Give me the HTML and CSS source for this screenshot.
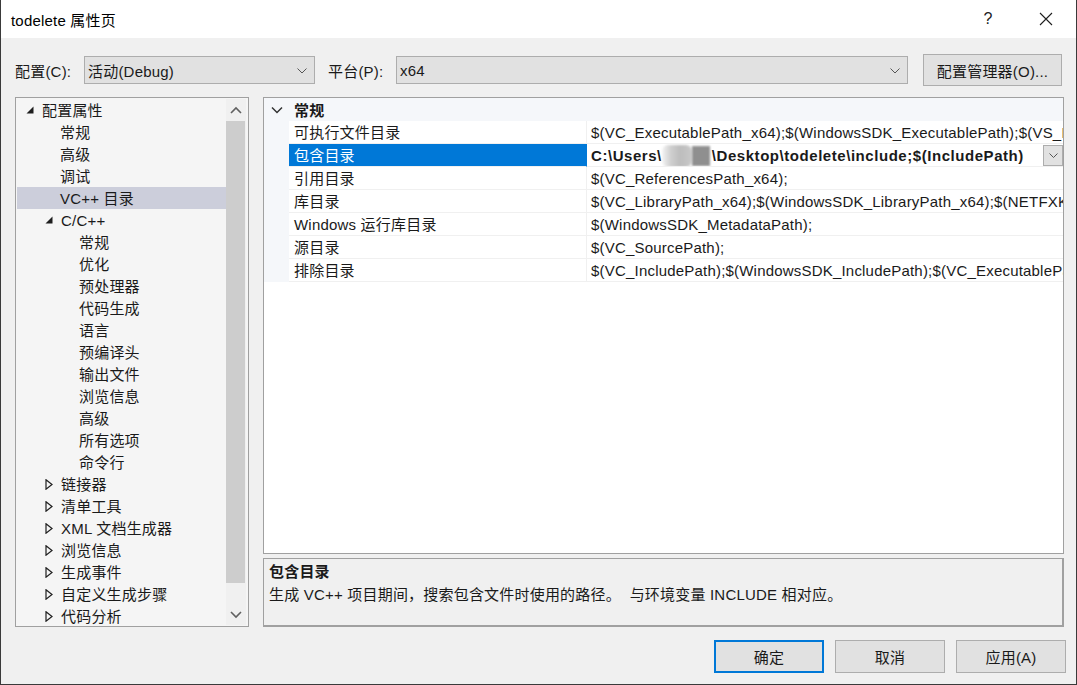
FILE: index.html
```html
<!DOCTYPE html>
<html lang="zh-CN">
<head>
<meta charset="utf-8">
<title>todelete 属性页</title>
<link rel="stylesheet" href="styles.css">
</head>
<body>
<div class="window">
  <div class="titlebar">
    <span class="title">todelete 属性页</span>
    <span class="tb-help">?</span>
    <span class="tb-close"><svg width="14" height="14" viewBox="0 0 14 14"><path d="M1 1 L13 13 M13 1 L1 13" stroke="#1e1e1e" stroke-width="1.1" fill="none"/></svg></span>
  </div>
  <div class="content">
    <div class="configrow">
      <span class="lbl lbl-cfg">配置(C):</span>
      <div class="combo combo-cfg"><span>活动(Debug)</span><svg class="chev" width="10" height="6" viewBox="0 0 10 6"><path d="M0.5 0.5 L5 5 L9.5 0.5" stroke="#555" fill="none"/></svg></div>
      <span class="lbl lbl-plat">平台(P):</span>
      <div class="combo combo-plat"><span>x64</span><svg class="chev" width="10" height="6" viewBox="0 0 10 6"><path d="M0.5 0.5 L5 5 L9.5 0.5" stroke="#555" fill="none"/></svg></div>
      <div class="btn btn-mgr">配置管理器(O)...</div>
    </div>
    <div class="main">
      <div class="tree">
        <div class="tree-list">
          <div class="trow l0"><svg class="tri" width="8" height="8" viewBox="0 0 8 8"><path d="M7.5 0.5 L7.5 7.5 L0.5 7.5 Z" fill="#1e1e1e"/></svg>配置属性</div>
          <div class="trow l1">常规</div>
          <div class="trow l1">高级</div>
          <div class="trow l1">调试</div>
          <div class="trow l1 sel">VC++ 目录</div>
          <div class="trow l1b"><svg class="tri" width="8" height="8" viewBox="0 0 8 8"><path d="M7.5 0.5 L7.5 7.5 L0.5 7.5 Z" fill="#1e1e1e"/></svg>C/C++</div>
          <div class="trow l2">常规</div>
          <div class="trow l2">优化</div>
          <div class="trow l2">预处理器</div>
          <div class="trow l2">代码生成</div>
          <div class="trow l2">语言</div>
          <div class="trow l2">预编译头</div>
          <div class="trow l2">输出文件</div>
          <div class="trow l2">浏览信息</div>
          <div class="trow l2">高级</div>
          <div class="trow l2">所有选项</div>
          <div class="trow l2">命令行</div>
          <div class="trow l1b"><svg class="tri-c" width="8" height="11" viewBox="0 0 8 11"><path d="M1 0.8 L7 5.5 L1 10.2 Z" fill="none" stroke="#1e1e1e" stroke-width="1.2"/></svg>链接器</div>
          <div class="trow l1b"><svg class="tri-c" width="8" height="11" viewBox="0 0 8 11"><path d="M1 0.8 L7 5.5 L1 10.2 Z" fill="none" stroke="#1e1e1e" stroke-width="1.2"/></svg>清单工具</div>
          <div class="trow l1b"><svg class="tri-c" width="8" height="11" viewBox="0 0 8 11"><path d="M1 0.8 L7 5.5 L1 10.2 Z" fill="none" stroke="#1e1e1e" stroke-width="1.2"/></svg>XML 文档生成器</div>
          <div class="trow l1b"><svg class="tri-c" width="8" height="11" viewBox="0 0 8 11"><path d="M1 0.8 L7 5.5 L1 10.2 Z" fill="none" stroke="#1e1e1e" stroke-width="1.2"/></svg>浏览信息</div>
          <div class="trow l1b"><svg class="tri-c" width="8" height="11" viewBox="0 0 8 11"><path d="M1 0.8 L7 5.5 L1 10.2 Z" fill="none" stroke="#1e1e1e" stroke-width="1.2"/></svg>生成事件</div>
          <div class="trow l1b"><svg class="tri-c" width="8" height="11" viewBox="0 0 8 11"><path d="M1 0.8 L7 5.5 L1 10.2 Z" fill="none" stroke="#1e1e1e" stroke-width="1.2"/></svg>自定义生成步骤</div>
          <div class="trow l1b"><svg class="tri-c" width="8" height="11" viewBox="0 0 8 11"><path d="M1 0.8 L7 5.5 L1 10.2 Z" fill="none" stroke="#1e1e1e" stroke-width="1.2"/></svg>代码分析</div>
        </div>
        <div class="vscroll">
          <div class="sb-arrow"><svg width="12" height="8" viewBox="0 0 12 8"><path d="M1 7 L6 2 L11 7" stroke="#606060" stroke-width="1.6" fill="none"/></svg></div>
          <div class="sb-track"><div class="sb-thumb"></div></div>
          <div class="sb-arrow"><svg width="12" height="8" viewBox="0 0 12 8"><path d="M1 1 L6 6 L11 1" stroke="#606060" stroke-width="1.6" fill="none"/></svg></div>
        </div>
      </div>
      <div class="rightcol">
        <div class="grid">
          <div class="ghead">
            <span class="gchev"><svg width="12" height="8" viewBox="0 0 12 8"><path d="M1 1.5 L6 6.5 L11 1.5" stroke="#333" stroke-width="1.5" fill="none"/></svg></span>
            <span class="gcat">常规</span>
          </div>
          <div class="grow"><span class="gname">可执行文件目录</span><span class="gval">$(VC_ExecutablePath_x64);$(WindowsSDK_ExecutablePath);$(VS_ExecutablePath);$(MSBuild_ExecutablePath)</span></div>
          <div class="grow gsel"><span class="gname">包含目录</span><span class="gval bold">C:\Users\<span class="blur"><i class="b1"></i><i class="b2"></i></span>\Desktop\todelete\include;$(IncludePath)</span><span class="gdrop"><svg width="9" height="5" viewBox="0 0 9 5"><path d="M0.5 0.5 L4.5 4.5 L8.5 0.5" stroke="#555" fill="none"/></svg></span></div>
          <div class="grow"><span class="gname">引用目录</span><span class="gval">$(VC_ReferencesPath_x64);</span></div>
          <div class="grow"><span class="gname">库目录</span><span class="gval">$(VC_LibraryPath_x64);$(WindowsSDK_LibraryPath_x64);$(NETFXKitsDir)Lib\um\x64</span></div>
          <div class="grow"><span class="gname">Windows 运行库目录</span><span class="gval">$(WindowsSDK_MetadataPath);</span></div>
          <div class="grow"><span class="gname">源目录</span><span class="gval">$(VC_SourcePath);</span></div>
          <div class="grow"><span class="gname">排除目录</span><span class="gval">$(VC_IncludePath);$(WindowsSDK_IncludePath);$(VC_ExecutablePath_x64);$(VC_LibraryPath_x64)</span></div>
        </div>
        <div class="desc">
          <div class="desc-title">包含目录</div>
          <div class="desc-text">生成 VC++ 项目期间，搜索包含文件时使用的路径。&nbsp; 与环境变量 INCLUDE 相对应。</div>
        </div>
      </div>
    </div>
    <div class="btnrow">
      <div class="btn btn-ok">确定</div>
      <div class="btn">取消</div>
      <div class="btn">应用(A)</div>
    </div>
  </div>
</div>
</body>
</html>
```

FILE: styles.css
```css
* { box-sizing: border-box; }
html, body { margin: 0; padding: 0; }
body {
  width: 1077px;
  height: 685px;
  overflow: hidden;
  font-family: "Liberation Sans", "Noto Sans CJK SC", sans-serif;
  font-size: 15px;
  letter-spacing: 0.2px;
  color: #1a1a1a;
  background: #f0f0f0;
}
.window {
  width: 1077px;
  height: 685px;
  border: 1px solid #3a3a3a;
  border-top: none;
  display: flex;
  flex-direction: column;
}
.titlebar {
  height: 38px;
  background: #fff;
  display: flex;
  align-items: center;
  padding-left: 10px;
  flex: none;
}
.title { flex: 1; font-size: 15px; color: #000; }
.tb-help { width: 58px; text-align: center; font-size: 16px; color: #222; }
.tb-close { width: 58px; display: flex; justify-content: center; align-items: center; margin-right: 1px; }
.content {
  flex: 1;
  display: flex;
  flex-direction: column;
  padding: 0 10px 0 14px;
}
.configrow {
  margin-top: 16px;
  height: 32px;
  display: flex;
  align-items: center;
}
.lbl { white-space: nowrap; }
.lbl-cfg { width: 69px; }
.lbl-plat { width: 68px; margin-left: 13px; }
.combo {
  height: 28px;
  background: #e1e1e1;
  border: 1px solid #adadad;
  display: flex;
  align-items: center;
  justify-content: space-between;
  padding: 0 7px 0 3px;
}
.combo-cfg { width: 231px; }
.combo-plat { width: 512px; }
.chev { margin-top: 1px; }
.btn {
  height: 33px;
  width: 110px;
  background: #e1e1e1;
  border: 1px solid #adadad;
  display: flex;
  align-items: center;
  justify-content: center;
}
.btn-mgr { width: 139px; margin-left: 15px; height: 32px; }
.main {
  margin-top: 11px;
  height: 530px;
  display: flex;
  gap: 14px;
}
.tree {
  width: 234px;
  border: 1px solid #a0a0a0;
  background: #f5f5f5;
  display: flex;
  padding: 1px;
}
.tree-list { flex: 1; }
.trow {
  height: 22px;
  line-height: 22px;
  padding-top: 1px;
  white-space: nowrap;
  display: flex;
  align-items: center;
}
.trow.l0 { padding-left: 9px; }
.trow.l1 { padding-left: 43px; }
.trow.l1b { padding-left: 28px; }
.trow.l2 { padding-left: 62px; }
.trow.sel { background: #cccedb; }
.tri { margin-right: 8px; flex: none; margin-top: -1px; }
.tri-c { margin-right: 8px; flex: none; }
.vscroll {
  width: 20px;
  background: #f0f0f0;
  display: flex;
  flex-direction: column;
  margin-right: 1px;
}
.sb-arrow { height: 21px; display: flex; align-items: center; justify-content: center; }
.sb-track { flex: 1; position: relative; }
.sb-thumb { position: absolute; left: 0; right: 1px; top: 1px; height: 462px; background: #cdcdcd; }
.rightcol {
  width: 801px;
  display: flex;
  flex-direction: column;
  gap: 4px;
}
.grid {
  height: 457px;
  border: 1px solid #a0a0a0;
  background: #fff;
  overflow: hidden;
}
.ghead {
  height: 23px;
  background: #f5f7fa;
  display: flex;
  align-items: center;
}
.gchev { width: 25px; display: flex; justify-content: center; padding-left: 1px; }
.gcat { font-weight: bold; padding-left: 5px; }
.grow {
  height: 23px;
  display: flex;
  background: #f5f7fa;
  padding-left: 25px;
  position: relative;
}
.gname {
  width: 298px;
  flex: none;
  background: #fff;
  border-bottom: 1px solid #f0f0f0;
  border-right: 1px solid #f0f0f0;
  padding-left: 5px;
  padding-top: 1px;
  line-height: 21px;
  white-space: nowrap;
}
.gval {
  flex: 1;
  background: #fff;
  border-bottom: 1px solid #f0f0f0;
  padding-left: 4px;
  padding-top: 1px;
  line-height: 21px;
  white-space: nowrap;
  overflow: hidden;
}
.gval.bold { font-weight: bold; display: flex; align-items: center; letter-spacing: 0.55px; }
.gsel .gname { background: #0078d7; color: #fff; border-right-color: #0078d7; }
.blur { display: inline-flex; width: 50px; height: 22px; align-items: center; }
.blur .b1 { display: block; width: 30px; height: 22px; background: linear-gradient(90deg, #f4f4f4, #cfcfcf 30%, #bdbdbd 60%, #c9c9c9); border-radius: 6px; filter: blur(1px); }
.blur .b2 { display: block; width: 18px; height: 20px; background: #8f8f8f; filter: blur(1px); }
.gdrop {
  position: absolute;
  right: 0;
  top: 1px;
  width: 20px;
  height: 21px;
  background: #e1e1e1;
  border: 1px solid #adadad;
  display: flex;
  align-items: center;
  justify-content: center;
}
.desc {
  height: 69px;
  border: 1px solid #a0a0a0;
  border-right-width: 2px;
  border-bottom-width: 2px;
  background: #f0f0f0;
  padding: 2px 5px;
}
.desc-title { font-weight: bold; line-height: 22px; }
.desc-text { line-height: 24px; }
.btnrow {
  margin-top: 13px;
  display: flex;
  justify-content: flex-end;
  gap: 11px;
}
.btn-ok { border: 2px solid #0078d7; }
```
